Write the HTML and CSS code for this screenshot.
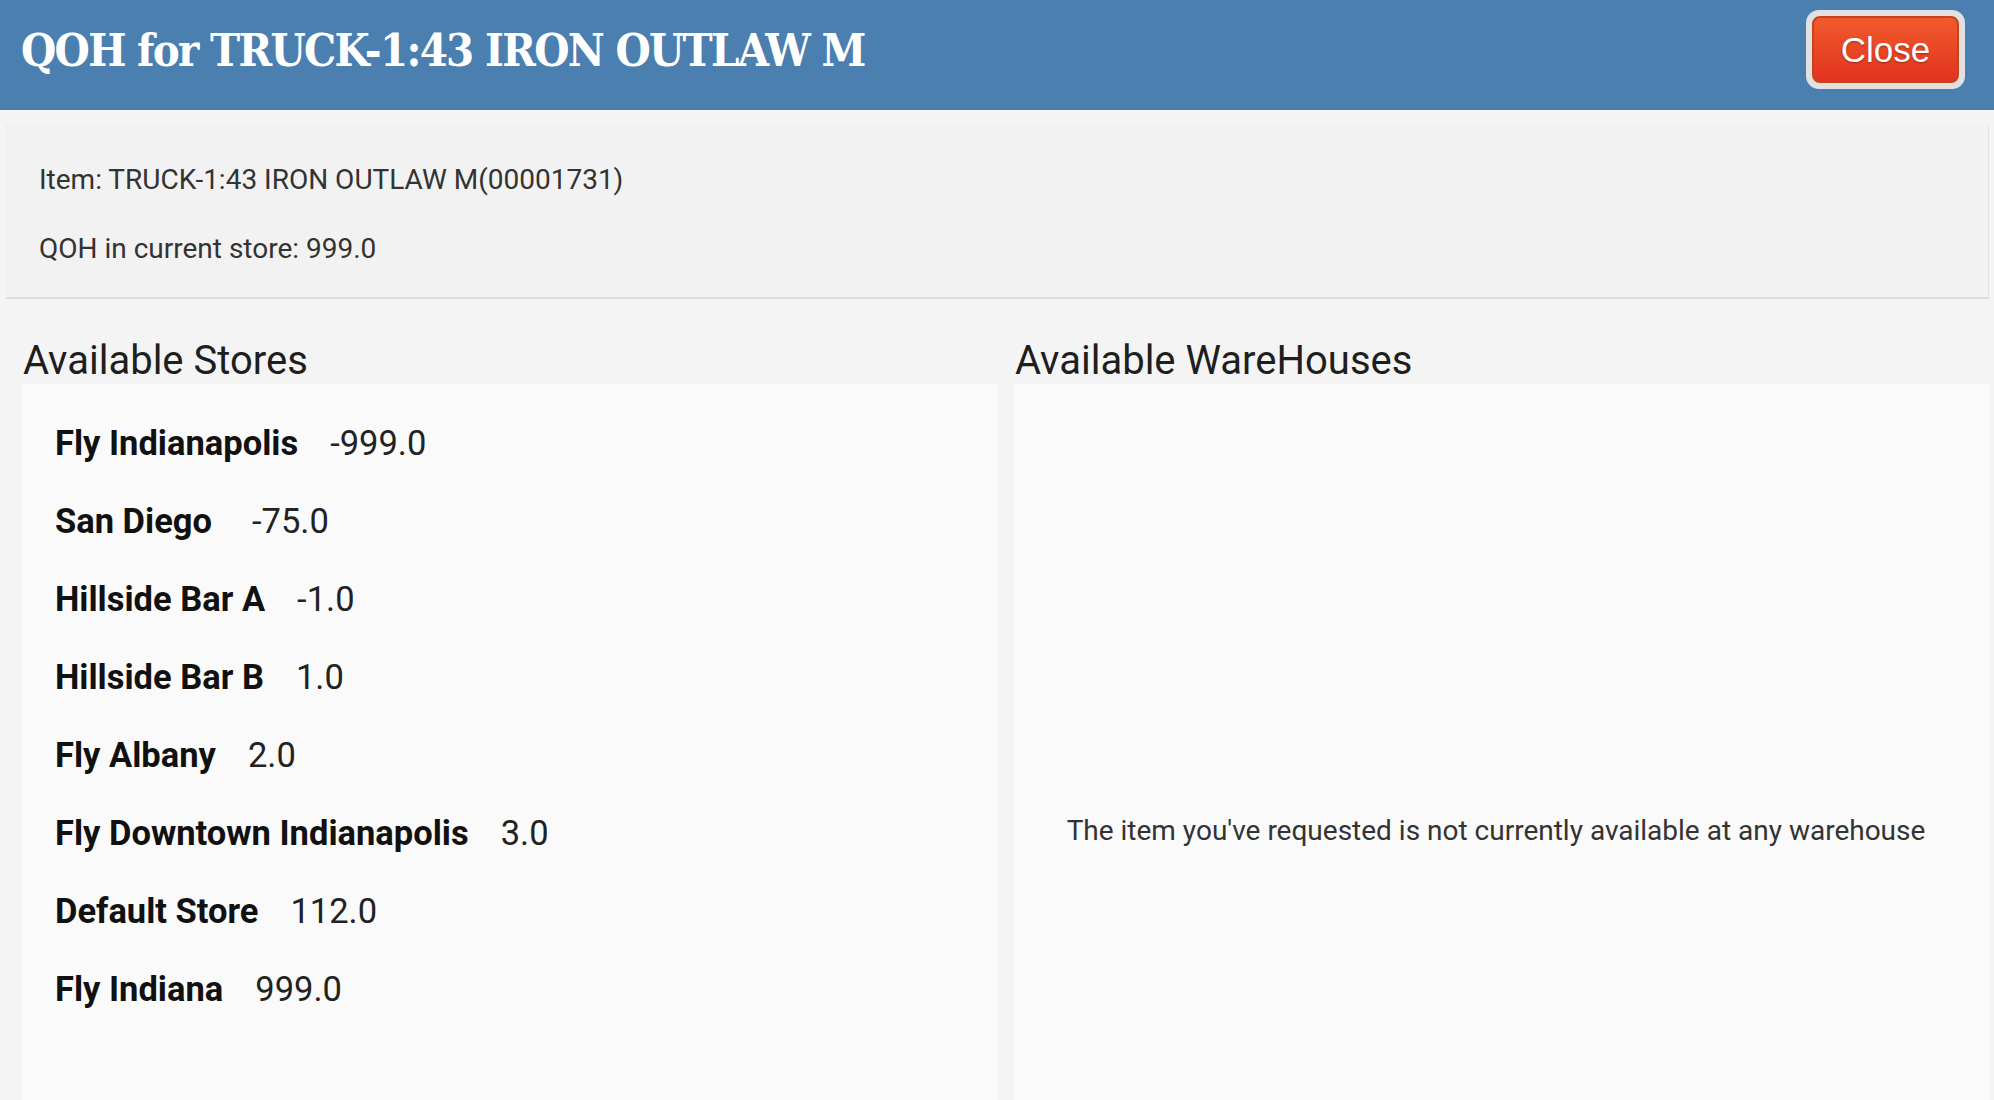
FILE: index.html
```html
<!DOCTYPE html>
<html>
<head>
<meta charset="utf-8">
<title>QOH</title>
<link rel="stylesheet" href="styles.css">
</head>
<body>
<div class="page">
  <header class="topbar">
    <h1 class="title">QOH for TRUCK-1:43 IRON OUTLAW M</h1>
    <div class="close-ring"><button class="close-btn">Close</button></div>
  </header>
  <section class="info">
    <p class="info-line">Item: TRUCK-1:43 IRON OUTLAW M(00001731)</p>
    <p class="info-line">QOH in current store: 999.0</p>
  </section>
  <div class="columns">
    <div class="col">
      <h2 class="col-title">Available Stores</h2>
      <div class="panel">
        <div class="row"><span class="name">Fly Indianapolis</span><span class="qty">-999.0</span></div>
        <div class="row"><span class="name">San Diego</span><span class="qty qty-wide">-75.0</span></div>
        <div class="row"><span class="name">Hillside Bar A</span><span class="qty">-1.0</span></div>
        <div class="row"><span class="name">Hillside Bar B</span><span class="qty">1.0</span></div>
        <div class="row"><span class="name">Fly Albany</span><span class="qty">2.0</span></div>
        <div class="row"><span class="name">Fly Downtown Indianapolis</span><span class="qty">3.0</span></div>
        <div class="row"><span class="name">Default Store</span><span class="qty">112.0</span></div>
        <div class="row"><span class="name">Fly Indiana</span><span class="qty">999.0</span></div>
      </div>
    </div>
    <div class="col">
      <h2 class="col-title">Available WareHouses</h2>
      <div class="panel panel-empty">
        <p class="empty-msg">The item you've requested is not currently available at any warehouse</p>
      </div>
    </div>
  </div>
</div>
</body>
</html>
```
FILE: styles.css
```css
html, body {
  margin: 0;
  padding: 0;
  height: 100%;
  overflow: hidden;
}
body {
  background: #f4f4f4;
  font-family: Roboto, "Liberation Sans", sans-serif;
  color: #222;
}
.page {
  height: 1100px;
  display: flex;
  flex-direction: column;
}
.topbar {
  height: 110px;
  flex: none;
  background: #4a7fb0;
  display: flex;
  justify-content: space-between;
  align-items: flex-start;
  padding: 0 29px 0 21px;
  box-sizing: border-box;
}
.title {
  margin: 21px 0 0 0;
  font-family: "DejaVu Serif Condensed", "DejaVu Serif", "Liberation Serif", serif;
  font-stretch: condensed;
  font-weight: bold;
  font-size: 45px;
  line-height: 60px;
  color: #fff;
  letter-spacing: -1.7px;
  white-space: nowrap;
}
.close-ring {
  margin-top: 10px;
  padding: 6px;
  background: #e1e1e1;
  border-radius: 13px;
}
.close-btn {
  display: block;
  width: 147px;
  height: 67px;
  box-sizing: border-box;
  border: 2px solid #c4441d;
  border-radius: 8px;
  background: linear-gradient(#f05b2b, #e3331f);
  color: #fff;
  font-family: "Liberation Sans", Arial, sans-serif;
  font-size: 35px;
  padding: 0;
  text-shadow: 0 1px 2px rgba(0,0,0,0.35);
}
.info {
  flex: none;
  margin: 15px 5px 0 6px;
  background: #f2f2f2;
  border-left: 1px solid #ececec;
  border-right: 1px solid #e2e2e2;
  border-bottom: 2px solid #dcdcdc;
  padding: 20px 0 14px 32px;
}
.info-line {
  margin: 0;
  font-size: 28px;
  line-height: 69px;
  color: #333;
}
.columns {
  flex: 1;
  display: flex;
  gap: 16px;
  padding: 0 4px 0 22px;
  min-height: 0;
}
.col {
  flex: 1;
  display: flex;
  flex-direction: column;
  min-width: 0;
}
.col-title {
  margin: 39px 0 0 1px;
  font-weight: normal;
  font-size: 40px;
  line-height: 46px;
  color: #1e1e1e;
}
.panel {
  flex: 1;
  background: #fafafa;
  padding: 20px 0 0 33px;
}
.row {
  height: 78px;
  line-height: 78px;
  font-size: 34.5px;
  white-space: nowrap;
}
.name {
  font-weight: bold;
  color: #111;
}
.qty {
  margin-left: 32px;
  color: #222;
}
.qty-wide {
  margin-left: 40px;
}
.panel-empty {
  padding: 430px 0 0 0;
  text-align: center;
}
.empty-msg {
  margin: 0 0 0 -12px;
  font-size: 28px;
  line-height: 33px;
  color: #333;
}
```
